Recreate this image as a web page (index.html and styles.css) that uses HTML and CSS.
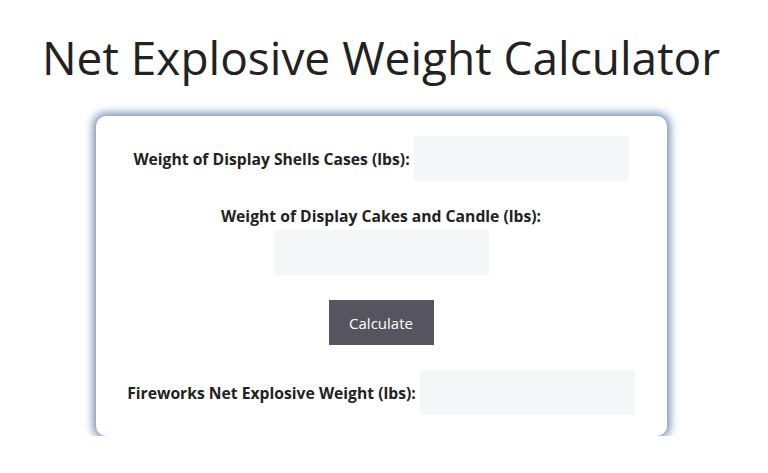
FILE: index.html
```html
<!DOCTYPE html>
<html lang="en">
<head>
  <meta charset="UTF-8">
  <meta name="viewport" content="width=device-width, initial-scale=1.0">
  <title>Net Explosive Weight Calculator</title>
  <link rel="stylesheet" href="styles.css">
</head>
<body>
  <h1>Net Explosive Weight Calculator</h1>
  <div class="calculator">
    <div class="field">
      <label for="shells">Weight of Display Shells Cases (lbs):</label>
      <input type="text" id="shells">
    </div>
    <div class="field">
      <label for="cakes">Weight of Display Cakes and Candle (lbs):</label>
      <input type="text" id="cakes">
    </div>
    <div class="field">
      <button onclick="calculate()">Calculate</button>
    </div>
    <div class="field">
      <label for="result">Fireworks Net Explosive Weight (lbs):</label>
      <input type="text" id="result" readonly>
    </div>
  </div>

  <script>
    function calculate() {
      const shells = parseFloat(document.getElementById('shells').value) || 0;
      const cakes = parseFloat(document.getElementById('cakes').value) || 0;
      // Shells count 25%, cakes and candles 5%
      const net = shells * 0.25 + cakes * 0.05;
      document.getElementById('result').value = net.toFixed(2);
    }
  </script>
</body>
</html>
```

FILE: styles.css
```css
body {
  background-color: #fff;
  color: #222;
  font-family: "Open Sans", "Noto Sans", sans-serif;
  margin: 0;
  padding: 0 6px 0 0;
}
h1 {
  font-weight: 400;
  font-size: 46px;
  text-align: center;
  margin: 26px 0 28px;
  line-height: 62px;
  color: #222;
}
.calculator {
  width: 511px;
  margin: 0 auto;
  padding: 20px 30px 21px;
  background-color: #fff;
  border-radius: 10px;
  box-shadow: 0 0 8px 3px rgba(70, 105, 155, 0.75);
  display: flex;
  flex-direction: column;
  gap: 25px;
}
.field {
  display: flex;
  flex-wrap: wrap;
  justify-content: center;
  align-items: center;
  column-gap: 4px;
  row-gap: 4px;
}
label {
  font-weight: 700;
  font-size: 15.7px;
  line-height: 20px;
}
input {
  width: 215px;
  height: 45px;
  box-sizing: border-box;
  border: none;
  background-color: #f5f6f8;
  padding: 0 10px;
  font-size: 15px;
}
button {
  width: 105px;
  height: 45px;
  background-color: #55545f;
  color: #fff;
  border: none;
  font-family: inherit;
  font-size: 15px;
  cursor: pointer;
}
button:hover {
  background-color: #444;
}
```
